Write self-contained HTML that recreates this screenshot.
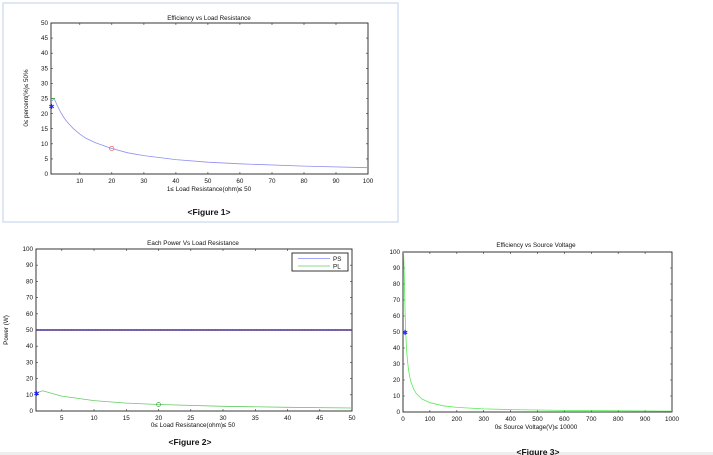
<!DOCTYPE html>
<html><head><meta charset="utf-8"><style>
html,body{margin:0;padding:0;background:#fff;width:713px;height:455px;overflow:hidden}
svg{display:block}
text{font-family:"Liberation Sans",sans-serif;fill:#111}
.t{font-size:6.3px}
.cap{font-size:8.5px;font-weight:bold;fill:#111}
</style></head><body>
<svg width="713" height="455" viewBox="0 0 713 455" xmlns="http://www.w3.org/2000/svg">
<rect x="0" y="0" width="713" height="455" fill="#fff"/>
<rect x="3" y="3" width="395" height="219" fill="none" stroke="#c9d9ee" stroke-width="1.2"/>
<rect x="0" y="452" width="713" height="3" fill="#eee"/>

<!-- Figure 1 -->
<text x="209" y="20" class="t" text-anchor="middle">Efficiency vs Load Resistance</text>
<rect x="51" y="23" width="317" height="151" fill="none" stroke="#222" stroke-width="0.9"/>
<g class="t" text-anchor="end">
<text x="48" y="176">0</text><text x="48" y="161">5</text><text x="48" y="146">10</text><text x="48" y="131">15</text><text x="48" y="116">20</text><text x="48" y="100.5">25</text><text x="48" y="85.5">30</text><text x="48" y="70.5">35</text><text x="48" y="55">40</text><text x="48" y="40">45</text><text x="48" y="25">50</text>
</g>
<g stroke="#333" stroke-width="0.6">
<path d="M51 158.9h2M51 143.8h2M51 128.7h2M51 113.6h2M51 98.5h2M51 83.4h2M51 68.3h2M51 53.2h2M51 38.1h2M368 158.9h-2M368 143.8h-2M368 128.7h-2M368 113.6h-2M368 98.5h-2M368 83.4h-2M368 68.3h-2M368 53.2h-2M368 38.1h-2"/>
<path d="M79.8 174v-2M111.8 174v-2M143.9 174v-2M175.9 174v-2M207.9 174v-2M239.9 174v-2M272 174v-2M304 174v-2M336 174v-2M79.8 23v2M111.8 23v2M143.9 23v2M175.9 23v2M207.9 23v2M239.9 23v2M272 23v2M304 23v2M336 23v2"/>
</g>
<g class="t" text-anchor="middle">
<text x="79.8" y="183">10</text><text x="111.8" y="183">20</text><text x="143.9" y="183">30</text><text x="175.9" y="183">40</text><text x="207.9" y="183">50</text><text x="239.9" y="183">60</text><text x="272" y="183">70</text><text x="304" y="183">80</text><text x="336" y="183">90</text><text x="368" y="183">100</text>
</g>
<text x="209" y="191" class="t" text-anchor="middle">1≤ Load Resistance(ohm)≤ 50</text>
<text x="28" y="98" class="t" text-anchor="middle" transform="rotate(-90 28 98)">0≤ percent(%)≤ 50%</text>
<polyline fill="none" stroke="#8f8fef" stroke-width="0.8" points="52,101 54.2,98.5 57.4,106 60.6,112.1 63.8,117.5 67,121.8 73.4,128.7 79.8,134.1 86.2,138.4 95.8,142.9 111.8,148.5 127.8,152.8 143.9,155.6 175.9,159.6 207.9,162.2 239.9,163.8 304,166.1 368,167.7"/>
<path d="M52 98.5h3" stroke="#3a3" stroke-width="0.8"/>
<text x="51.5" y="109" font-size="7" text-anchor="middle" style="fill:#22e">✱</text>
<circle cx="111.8" cy="148.5" r="2.2" fill="none" stroke="#e55" stroke-width="0.7"/>
<text x="209" y="215" class="cap" text-anchor="middle">&lt;Figure 1&gt;</text>

<!-- Figure 2 -->
<text x="193" y="245" class="t" text-anchor="middle">Each Power Vs Load Resistance</text>
<rect x="36" y="249" width="316" height="162" fill="none" stroke="#222" stroke-width="0.9"/>
<g class="t" text-anchor="end">
<text x="33" y="413">0</text><text x="33" y="397">10</text><text x="33" y="380.6">20</text><text x="33" y="364.4">30</text><text x="33" y="348.2">40</text><text x="33" y="332">50</text><text x="33" y="315.8">60</text><text x="33" y="299.6">70</text><text x="33" y="283.4">80</text><text x="33" y="267.2">90</text><text x="33" y="251">100</text>
</g>
<g stroke="#333" stroke-width="0.6">
<path d="M36 394.8h2M36 378.6h2M36 362.4h2M36 346.2h2M36 313.8h2M36 297.6h2M36 281.4h2M36 265.2h2M352 394.8h-2M352 378.6h-2M352 362.4h-2M352 346.2h-2M352 313.8h-2M352 297.6h-2M352 281.4h-2M352 265.2h-2"/>
<path d="M61.8 411v-2M94 411v-2M126.3 411v-2M158.6 411v-2M190.8 411v-2M223 411v-2M255.3 411v-2M287.6 411v-2M319.8 411v-2M61.8 249v2M94 249v2M126.3 249v2M158.6 249v2M190.8 249v2M223 249v2M255.3 249v2M287.6 249v2"/>
</g>
<g class="t" text-anchor="middle">
<text x="61.8" y="420">5</text><text x="94" y="420">10</text><text x="126.3" y="420">15</text><text x="158.6" y="420">20</text><text x="190.8" y="420">25</text><text x="223" y="420">30</text><text x="255.3" y="420">35</text><text x="287.6" y="420">40</text><text x="319.8" y="420">45</text><text x="352" y="420">50</text>
</g>
<text x="193" y="427" class="t" text-anchor="middle">0≤ Load Resistance(ohm)≤ 50</text>
<text x="8" y="330" class="t" text-anchor="middle" transform="rotate(-90 8 330)">Power (W)</text>
<path d="M36 330H352" stroke="#3b2b9a" stroke-width="1.6"/>
<path d="M36 330H352" stroke="#c33" stroke-width="0.5" stroke-dasharray="1 2"/>
<polyline fill="none" stroke="#6c6" stroke-width="0.8" points="36,393 42.5,390.8 61.8,396.1 94,400.6 126.3,403.1 158.6,404.5 223,406.3 287.6,407.3 352,408"/>
<text x="36.5" y="396" font-size="7" text-anchor="middle" style="fill:#22e">✱</text>
<circle cx="158.6" cy="404.5" r="2" fill="none" stroke="#3a3" stroke-width="0.7"/>
<rect x="292" y="253" width="56" height="18" fill="#fff" stroke="#222" stroke-width="0.9"/>
<path d="M298 258.5h32" stroke="#88f" stroke-width="0.8"/>
<path d="M298 266h32" stroke="#6c6" stroke-width="0.8"/>
<text x="333" y="261" class="t">PS</text><text x="333" y="268.5" class="t">PL</text>
<text x="190" y="445" class="cap" text-anchor="middle">&lt;Figure 2&gt;</text>

<!-- Figure 3 -->
<text x="536" y="247" class="t" text-anchor="middle">Efficiency vs Source Voltage</text>
<rect x="403" y="252" width="269" height="160" fill="none" stroke="#222" stroke-width="0.9"/>
<g class="t" text-anchor="end">
<text x="400" y="414">0</text><text x="400" y="398">10</text><text x="400" y="382">20</text><text x="400" y="366">30</text><text x="400" y="350">40</text><text x="400" y="334">50</text><text x="400" y="318">60</text><text x="400" y="302">70</text><text x="400" y="286">80</text><text x="400" y="270">90</text><text x="400" y="254">100</text>
</g>
<g stroke="#333" stroke-width="0.6">
<path d="M403 396h2M403 380h2M403 364h2M403 348h2M403 332h2M403 316h2M403 300h2M403 284h2M403 268h2M672 396h-2M672 380h-2M672 364h-2M672 348h-2M672 332h-2M672 316h-2M672 300h-2M672 284h-2M672 268h-2"/>
<path d="M429.9 412v-2M456.8 412v-2M483.7 412v-2M510.6 412v-2M537.5 412v-2M564.4 412v-2M591.3 412v-2M618.2 412v-2M645.1 412v-2M429.9 252v2M456.8 252v2M483.7 252v2M510.6 252v2M537.5 252v2M564.4 252v2M591.3 252v2M618.2 252v2M645.1 252v2"/>
</g>
<g class="t" text-anchor="middle">
<text x="403" y="421">0</text><text x="429.9" y="421">100</text><text x="456.8" y="421">200</text><text x="483.7" y="421">300</text><text x="510.6" y="421">400</text><text x="537.5" y="421">500</text><text x="564.4" y="421">600</text><text x="591.3" y="421">700</text><text x="618.2" y="421">800</text><text x="645.1" y="421">900</text><text x="672" y="421">1000</text>
</g>
<text x="536" y="429" class="t" text-anchor="middle">0≤ Source Voltage(V)≤ 10000</text>
<polyline fill="none" stroke="#5e5" stroke-width="0.8" points="403.6,252 404.1,270 404.6,291.2 405.2,315.8 405.7,332 406.5,348.3 407.3,359 408.4,368.8 409.7,376.8 411.1,382.4 413.8,389.4 416.5,393.8 421.8,398.9 429.9,402.7 443.4,405.8 456.8,407.4 483.7,408.9 510.6,409.6 564.4,410.4 672,411.1"/>
<text x="405" y="335" font-size="7" text-anchor="middle" style="fill:#22e">✱</text>
<text x="538" y="455" class="cap" text-anchor="middle">&lt;Figure 3&gt;</text>
</svg>
</body></html>
